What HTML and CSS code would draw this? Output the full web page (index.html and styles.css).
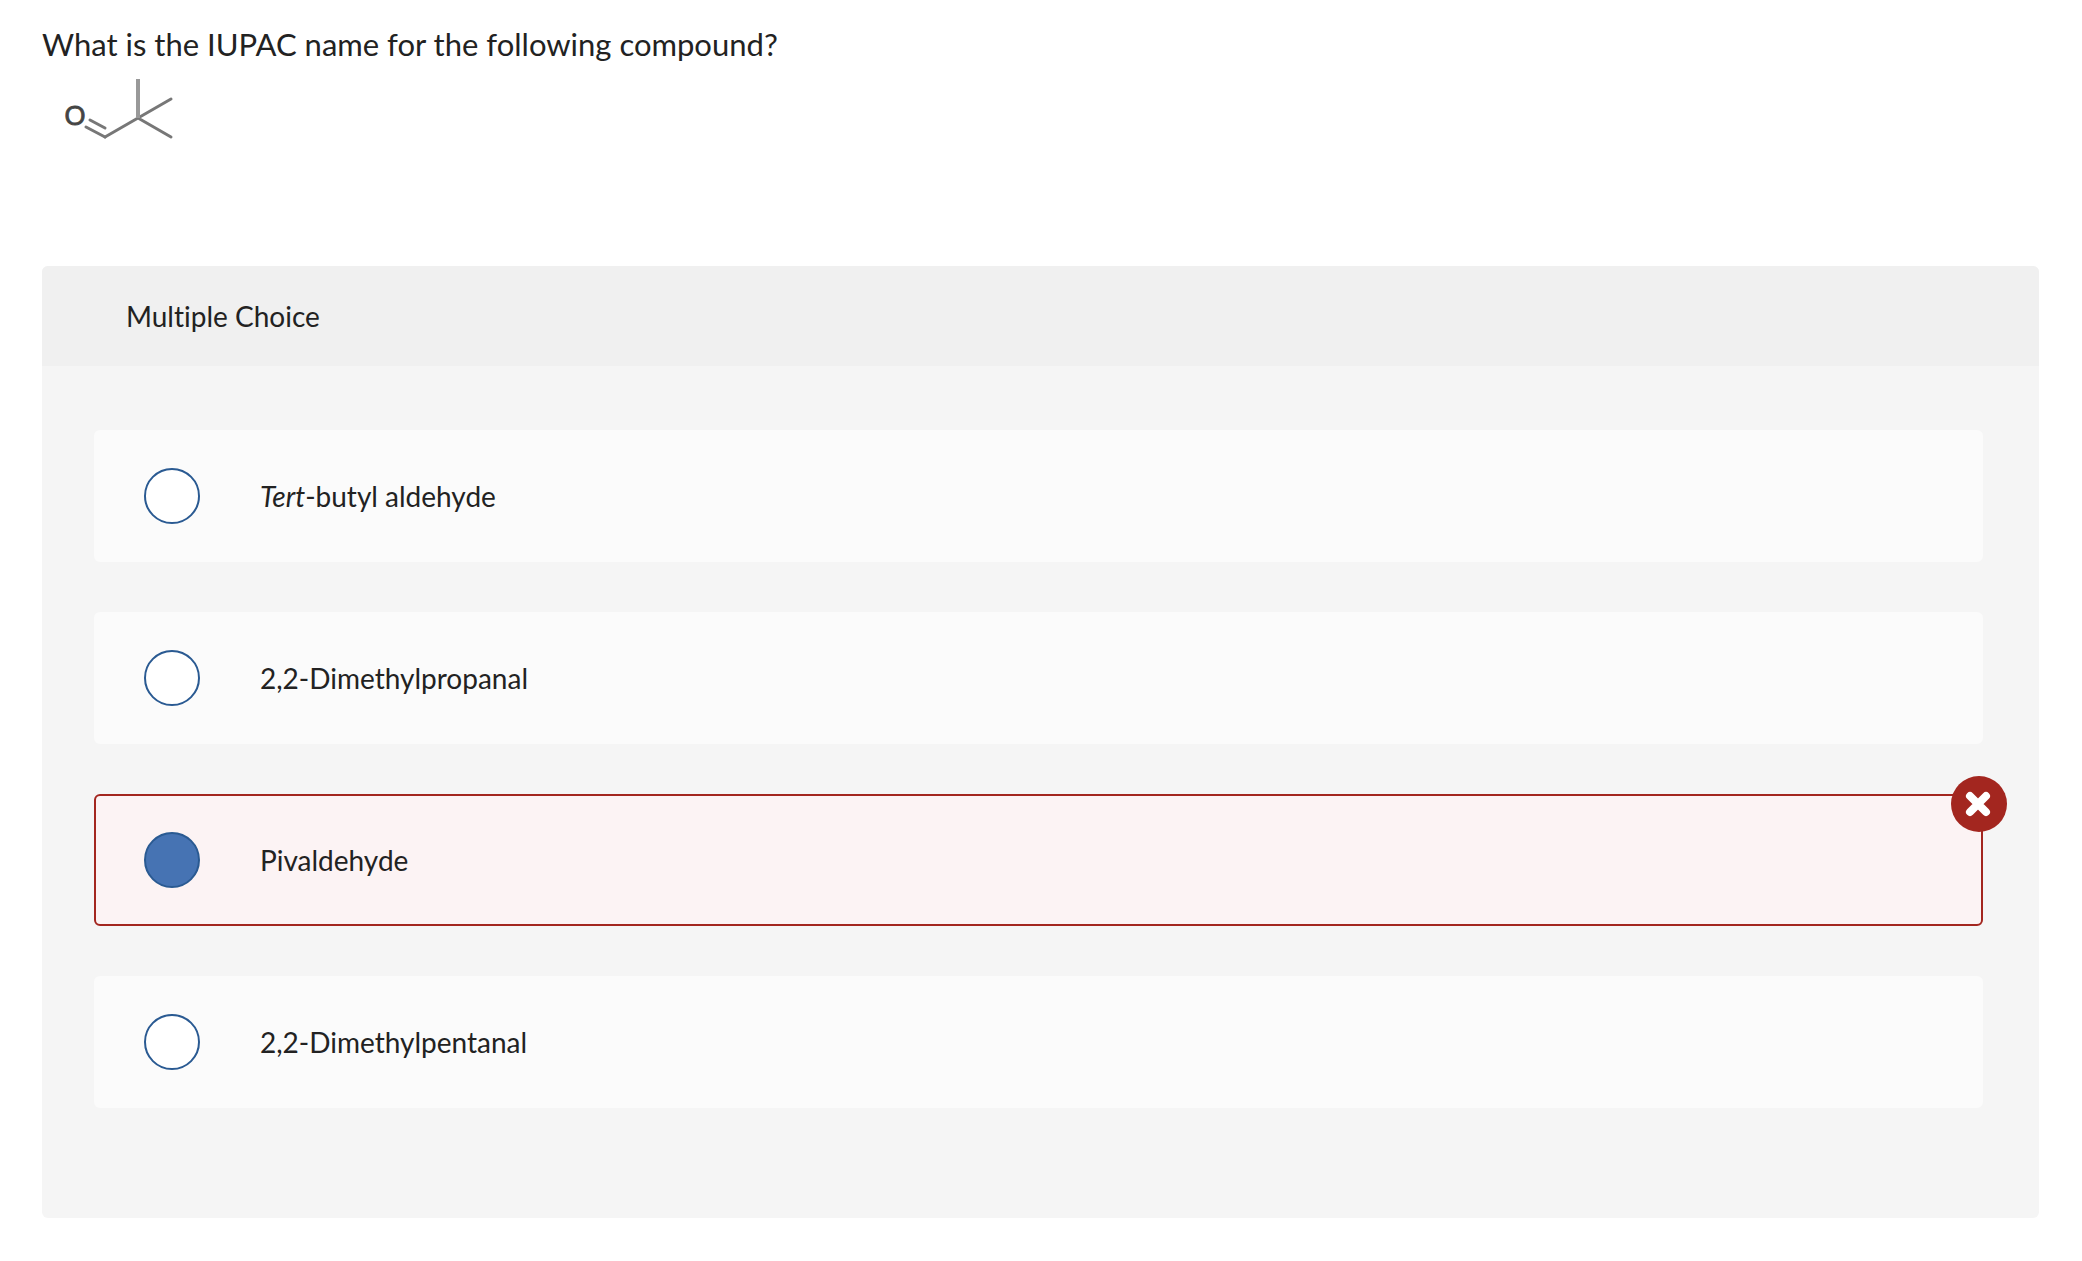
FILE: index.html
```html
<!DOCTYPE html>
<html lang="en">
<head>
    <meta charset="UTF-8">
    <title>Multiple Choice</title>
    <link rel="stylesheet" href="styles.css">
</head>
<body>
<div class="question">
    <h1 class="prompt">What is the IUPAC name for the following compound?</h1>
    <svg class="compound" viewBox="0 0 150 150" role="img" aria-label="Skeletal formula">
        <text x="33" y="57" text-anchor="middle">O</text>
        <!-- double bond to oxygen -->
        <path d="M44 59L63 69M48 52L63 60"/>
        <!-- carbon chain -->
        <path d="M63 69L96 50L129 31M96 50L129 69"/>
        <path class="up" d="M96 11V50"/>
    </svg>
</div>
<form class="panel">
    <h2 class="panel-title">Multiple Choice</h2>
    <div class="choices">
        <label class="choice">
            <input type="radio" name="answer">
            <span><i>Tert</i>-butyl aldehyde</span>
        </label>
        <label class="choice">
            <input type="radio" name="answer">
            <span>2,2-Dimethylpropanal</span>
        </label>
        <label class="choice wrong">
            <input type="radio" name="answer" checked>
            <span>Pivaldehyde</span>
            <svg class="badge" viewBox="0 0 56 56" role="img" aria-label="Incorrect">
                <circle cx="28" cy="28" r="28"/>
                <path d="M19 20L35 36M35 20L19 36"/>
            </svg>
        </label>
        <label class="choice">
            <input type="radio" name="answer">
            <span>2,2-Dimethylpentanal</span>
        </label>
    </div>
</form>
</body>
</html>
```
FILE: styles.css
```css
* {
    box-sizing: border-box;
    margin: 0;
    padding: 0;
}
body {
    padding: 20px 43px 43px 42px;
    background: #fff;
    color: #222;
    font-family: Lato, "Liberation Sans", sans-serif;
    font-variant-ligatures: none;
}
.question {
    padding-bottom: 48px;
}
.prompt {
    font-size: 31px;
    font-weight: 400;
    line-height: 48px;
}
.compound {
    display: block;
    width: 150px;
    height: 150px;
    fill: none;
    stroke: #777;
    stroke-width: 3;
    stroke-linecap: round;
}
.compound text {
    fill: #444;
    stroke: #444;
    stroke-width: 0.8;
    font: 27px "Liberation Sans", sans-serif;
}
.compound .up {
    stroke: #999;
    stroke-width: 4;
    stroke-linecap: butt;
}
.panel {
    background: #f5f5f5;
    border-radius: 6px;
    overflow: hidden;
}
.panel-title {
    padding: 30px 84px;
    background: #f0f0f0;
    font-size: 28px;
    font-weight: 400;
    line-height: 40px;
}
.choices {
    display: flex;
    flex-direction: column;
    gap: 50px;
    padding: 64px 56px 110px 52px;
}
.choice {
    position: relative;
    display: flex;
    align-items: center;
    gap: 60px;
    padding: 36px 48px;
    border: 2px solid #fbfbfb;
    border-radius: 6px;
    background: #fbfbfb;
    font-size: 28px;
    line-height: 40px;
    cursor: pointer;
}
.choice input {
    appearance: none;
    width: 56px;
    height: 56px;
    border: 2px solid #2a5a92;
    border-radius: 50%;
    background: #fff;
}
.choice input:checked {
    background: #4673b3;
}
.wrong {
    border-color: #a3261f;
    background: #fcf3f4;
}
.badge {
    position: absolute;
    top: -20px;
    right: -26px;
    width: 56px;
    height: 56px;
    fill: #a3261f;
}
.badge path {
    stroke: #fff;
    stroke-width: 8;
    stroke-linecap: round;
}
```
